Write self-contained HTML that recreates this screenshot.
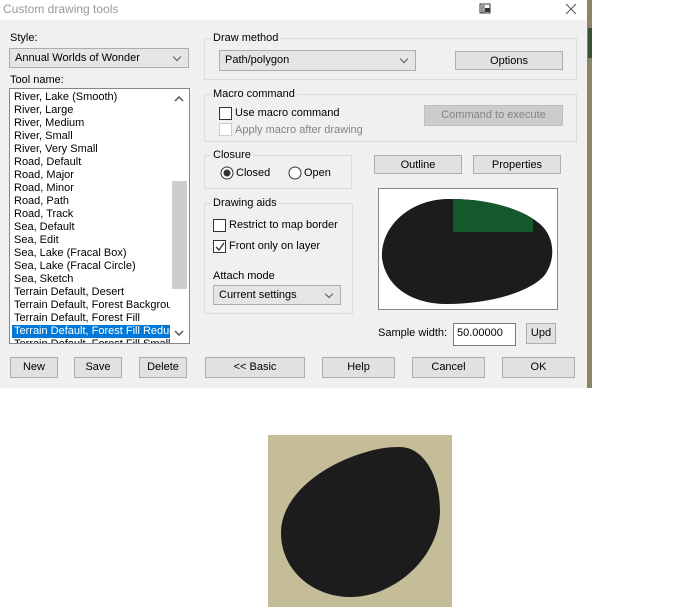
<!DOCTYPE html>
<html><head><style>
*{box-sizing:border-box;margin:0;padding:0}
body{width:678px;height:614px;background:#fff;position:relative;overflow:hidden;font-family:"Liberation Sans",sans-serif;font-size:11px;color:#000}
.a{position:absolute;white-space:nowrap}
.btn{position:absolute;background:#e1e1e1;border:1px solid #adadad;text-align:center;line-height:18px;font-size:11px}
.grp{position:absolute;border:1px solid #dcdcdc}
.gl{position:absolute;background:#f0f0f0;padding:0 2px;top:-8px;left:6px;line-height:14px}
.cmb{position:absolute;background:#e5e5e5;border:1px solid #acacac;line-height:18px;padding-left:5px}
.cmb:after{content:"";position:absolute;right:8px;top:5px;width:5px;height:5px;border-right:1px solid #555;border-bottom:1px solid #555;transform:rotate(45deg)}
.cb{position:absolute;width:13px;height:13px;border:1px solid #333;background:#fff}
.li{position:absolute;left:2px;height:13px;line-height:13px;padding-left:2px;width:158px;overflow:hidden}
</style></head><body>
<div class="a" style="left:0;top:0;width:587px;height:20px;background:#fff"></div>
<div class="a" style="left:3px;top:2px;font-size:12px;color:#999">Custom drawing tools</div>
<svg class="a" style="left:478px;top:2px" width="14" height="14"><rect x="2" y="2" width="10" height="9" fill="none" stroke="#333"/><rect x="7" y="6" width="5" height="4" fill="#333"/><line x1="4" y1="3" x2="4" y2="11" stroke="#333"/><line x1="6" y1="3" x2="6" y2="11" stroke="#333"/></svg>
<svg class="a" style="left:565px;top:3px" width="12" height="12"><path d="M1 1L11 11M11 1L1 11" stroke="#555" stroke-width="1"/></svg>
<div class="a" style="left:0;top:20px;width:587px;height:368px;background:#f0f0f0"></div>
<div class="a" style="left:587px;top:0;width:5px;height:388px;background:#8a8468"></div>
<div class="a" style="left:588px;top:28px;width:4px;height:30px;background:#3a4f38"></div>

<div class="a" style="left:10px;top:32px">Style:</div>
<div class="cmb" style="left:9px;top:48px;width:180px;height:20px">Annual Worlds of Wonder</div>
<div class="a" style="left:10px;top:74px">Tool name:</div>
<div class="a" style="left:9px;top:88px;width:181px;height:256px;border:1px solid #828790;background:#fff;overflow:hidden">
<div class="a" style="left:161px;top:0;width:17px;height:254px;background:#fff"></div>
<div class="a" style="left:162px;top:92px;width:15px;height:108px;background:#cdcdcd"></div>
<svg class="a" style="left:164px;top:6px" width="10" height="8"><path d="M1 6L5 2L9 6" stroke="#555" stroke-width="1.5" fill="none"/></svg>
<svg class="a" style="left:164px;top:240px" width="10" height="8"><path d="M1 2L5 6L9 2" stroke="#555" stroke-width="1.5" fill="none"/></svg>
<div class="li" style="top:2px">River, Lake (Smooth)</div>
<div class="li" style="top:15px">River, Large</div>
<div class="li" style="top:28px">River, Medium</div>
<div class="li" style="top:41px">River, Small</div>
<div class="li" style="top:54px">River, Very Small</div>
<div class="li" style="top:67px">Road, Default</div>
<div class="li" style="top:80px">Road, Major</div>
<div class="li" style="top:93px">Road, Minor</div>
<div class="li" style="top:106px">Road, Path</div>
<div class="li" style="top:119px">Road, Track</div>
<div class="li" style="top:132px">Sea, Default</div>
<div class="li" style="top:145px">Sea, Edit</div>
<div class="li" style="top:158px">Sea, Lake (Fracal Box)</div>
<div class="li" style="top:171px">Sea, Lake (Fracal Circle)</div>
<div class="li" style="top:184px">Sea, Sketch</div>
<div class="li" style="top:197px">Terrain Default, Desert</div>
<div class="li" style="top:210px">Terrain Default, Forest Backgrour</div>
<div class="li" style="top:223px">Terrain Default, Forest Fill</div>
<div class="li" style="top:236px;background:#0078d7;color:#fff">Terrain Default, Forest Fill Reduc</div>
<div class="li" style="top:249px">Terrain Default, Forest Fill Small</div>
</div>

<div class="grp" style="left:204px;top:38px;width:373px;height:42px"><div class="gl">Draw method</div></div>
<div class="cmb" style="left:219px;top:50px;width:197px;height:21px">Path/polygon</div>
<div class="btn" style="left:455px;top:51px;width:108px;height:19px">Options</div>

<div class="grp" style="left:204px;top:94px;width:373px;height:48px"><div class="gl">Macro command</div></div>
<div class="cb" style="left:219px;top:107px"></div><div class="a" style="left:235px;top:107px">Use macro command</div>
<div class="cb" style="left:219px;top:123px;border-color:#ccc"></div><div class="a" style="left:235px;top:124px;color:#838383">Apply macro after drawing</div>
<div class="btn" style="left:424px;top:105px;width:139px;height:21px;background:#cccccc;border-color:#bfbfbf;color:#838383">Command to execute</div>

<div class="grp" style="left:204px;top:155px;width:148px;height:34px"><div class="gl">Closure</div></div>
<svg class="a" style="left:220px;top:166px" width="14" height="14"><circle cx="7" cy="7" r="6" fill="#fff" stroke="#333"/><circle cx="7" cy="7" r="3.5" fill="#333"/></svg>
<div class="a" style="left:236px;top:167px">Closed</div>
<svg class="a" style="left:288px;top:166px" width="14" height="14"><circle cx="7" cy="7" r="6" fill="#fff" stroke="#333"/></svg>
<div class="a" style="left:304px;top:167px">Open</div>
<div class="btn" style="left:374px;top:155px;width:88px;height:19px">Outline</div>
<div class="btn" style="left:473px;top:155px;width:88px;height:19px">Properties</div>

<div class="grp" style="left:204px;top:203px;width:149px;height:111px"><div class="gl">Drawing aids</div></div>
<div class="cb" style="left:213px;top:219px"></div><div class="a" style="left:229px;top:219px">Restrict to map border</div>
<div class="cb" style="left:213px;top:240px"></div>
<svg class="a" style="left:214px;top:241px" width="12" height="12"><path d="M2 6L5 9L10 2" stroke="#333" stroke-width="1.3" fill="none"/></svg>
<div class="a" style="left:229px;top:240px">Front only on layer</div>
<div class="a" style="left:213px;top:270px">Attach mode</div>
<div class="cmb" style="left:213px;top:285px;width:128px;height:20px">Current settings</div>

<div class="a" style="left:378px;top:188px;width:180px;height:122px;background:#fff;border:1px solid #888"></div>
<svg class="a" style="left:378px;top:188px" width="180" height="122">
<defs><clipPath id="c"><path d="M69 11C110 10 150 22 166 40C178 55 176 75 166 88C150 105 110 116 69 116C35 116 8 100 4 70C2 40 30 12 69 11Z"/></clipPath></defs>
<path d="M69 11C110 10 150 22 166 40C178 55 176 75 166 88C150 105 110 116 69 116C35 116 8 100 4 70C2 40 30 12 69 11Z" fill="#1c1c1c"/>
<rect x="75" y="8" width="80" height="36" fill="#15582c" clip-path="url(#c)"/>
</svg>
<div class="a" style="left:378px;top:327px">Sample width:</div>
<div class="a" style="left:453px;top:323px;width:63px;height:23px;background:#fff;border:1px solid #7a7a7a;padding:3px 0 0 3px">50.00000</div>
<div class="btn" style="left:526px;top:323px;width:30px;height:21px">Upd</div>

<div class="btn" style="left:10px;top:357px;width:48px;height:21px">New</div>
<div class="btn" style="left:74px;top:357px;width:48px;height:21px">Save</div>
<div class="btn" style="left:139px;top:357px;width:48px;height:21px">Delete</div>
<div class="btn" style="left:205px;top:357px;width:100px;height:21px">&lt;&lt; Basic</div>
<div class="btn" style="left:322px;top:357px;width:73px;height:21px">Help</div>
<div class="btn" style="left:412px;top:357px;width:73px;height:21px">Cancel</div>
<div class="btn" style="left:502px;top:357px;width:73px;height:21px">OK</div>

<div class="a" style="left:268px;top:435px;width:184px;height:172px;background:#c4bd98"></div>
<svg class="a" style="left:268px;top:435px" width="184" height="172">
<path d="M132 12C155 12 172 40 172 75C172 120 130 160 85 162C45 163 13 135 13 98C13 60 55 30 95 18C110 13 122 12 132 12Z" fill="#1c1c1c"/>
</svg>
</body></html>
